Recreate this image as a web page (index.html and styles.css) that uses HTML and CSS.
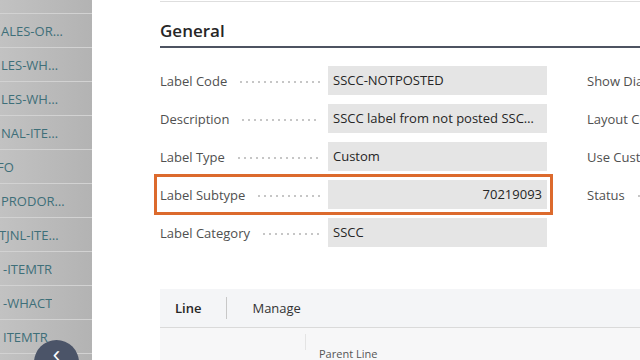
FILE: index.html
```html
<!DOCTYPE html>
<html lang="en">
<head>
    <meta charset="UTF-8">
    <meta name="viewport" content="width=device-width, initial-scale=1.0">
    <title>Label Card</title>
    <link rel="stylesheet" href="styles.css">
</head>
<body>
    <div class="page">
        <!-- Dimmed list pane on the left -->
        <aside class="list-pane">
            <div class="list-row"><span>ALES-ORDER-SHIPMENT</span></div>
            <div class="list-row"><span>LES-WH…</span></div>
            <div class="list-row"><span>LES-WH…</span></div>
            <div class="list-row"><span>NAL-ITEM-LABEL</span></div>
            <div class="list-row"><span class="cut">FO</span></div>
            <div class="list-row"><span>PRODORDER-OUTPUT</span></div>
            <div class="list-row"><span class="nudge">TJNL-ITEM-LABEL</span></div>
            <div class="list-row"><span class="pad">-ITEMTR</span></div>
            <div class="list-row"><span class="pad">-WHACT</span></div>
            <div class="list-row"><span class="pad">ITEMTR</span></div>
            <div class="list-row"></div>
            <button class="collapse-btn" aria-label="Collapse">&#8249;</button>
        </aside>

        <main class="card">
            <section class="general">
                <h2>General</h2>

                <div class="fields">
                    <div class="field">
                        <span class="caption">Label Code</span>
                        <span class="leader"></span>
                        <span class="value">SSCC-NOTPOSTED</span>
                    </div>
                    <div class="field right">
                        <span class="caption">Show Dialog</span>
                        <span class="leader"></span>
                    </div>

                    <div class="field">
                        <span class="caption">Description</span>
                        <span class="leader"></span>
                        <span class="value">SSCC label from not posted SSCC labels</span>
                    </div>
                    <div class="field right">
                        <span class="caption">Layout Code</span>
                        <span class="leader"></span>
                    </div>

                    <div class="field">
                        <span class="caption">Label Type</span>
                        <span class="leader"></span>
                        <span class="value">Custom</span>
                    </div>
                    <div class="field right">
                        <span class="caption">Use Custom Layout</span>
                        <span class="leader"></span>
                    </div>

                    <div class="field highlighted">
                        <span class="caption">Label Subtype</span>
                        <span class="leader"></span>
                        <span class="value number">70219093</span>
                    </div>
                    <div class="field right">
                        <span class="caption">Status</span>
                        <span class="leader"></span>
                    </div>

                    <div class="field">
                        <span class="caption">Label Category</span>
                        <span class="leader"></span>
                        <span class="value">SSCC</span>
                    </div>
                    <div class="field right"></div>
                </div>
            </section>

            <section class="lines">
                <div class="action-bar">
                    <span class="action active">Line</span>
                    <span class="divider"></span>
                    <span class="action">Manage</span>
                </div>
                <div class="grid-head">
                    <span class="col-sep"></span>
                    <span class="col-title">Parent Line</span>
                </div>
            </section>
        </main>
    </div>
</body>
</html>
```

FILE: styles.css
```css
body {
    margin: 0;
    padding: 0;
    font-family: "Open Sans", "Noto Sans", Arial, sans-serif;
    background-color: #fff;
    color: #212121;
    overflow: hidden;
}

.page {
    display: flex;
    width: 640px;
    height: 360px;
    overflow: hidden;
}

/* left list pane */
.list-pane {
    position: relative;
    flex: 0 0 92px;
    padding-top: 13px;
    background: linear-gradient(to right, #c2c2c2, #b3b3b3);
    overflow: hidden;
}

.list-row {
    height: 33px;
    border-top: 1px solid #d2d2d2;
    display: flex;
    align-items: center;
    font-size: 13px;
    color: #3e6f79;
    white-space: nowrap;
}

.list-row span {
    display: block;
    max-width: 66px;
    overflow: hidden;
    text-overflow: ellipsis;
    padding-left: 1px;
}

.list-row span.cut {
    margin-left: -4px;
}

.list-row span.nudge {
    margin-left: -2px;
}

.list-row span.pad {
    padding-left: 3px;
}

.collapse-btn {
    position: absolute;
    left: 34px;
    top: 340px;
    width: 45px;
    height: 45px;
    border-radius: 50%;
    border: none;
    background-color: #4b5468;
    color: #fff;
    font-size: 22px;
    line-height: 30px;
    padding: 0;
    display: flex;
    justify-content: center;
    align-items: flex-start;
}

/* card */
.card {
    flex: 1;
    padding-left: 68px;
    min-width: 0;
}

.general {
    width: 560px;
    margin-top: 1px;
    border-top: 1px solid #dedede;
}

.general h2 {
    margin: 0;
    padding-top: 17px;
    padding-bottom: 3px;
    font-size: 17px;
    font-weight: 600;
    line-height: 24px;
    color: #262626;
    border-bottom: 2px solid #4d5361;
}

.fields {
    display: grid;
    grid-template-columns: 387px 180px;
    column-gap: 40px;
    row-gap: 9px;
    margin-top: 18px;
}

.field {
    display: flex;
    align-items: center;
    height: 29px;
    font-size: 13px;
}

.caption {
    color: #505050;
    white-space: nowrap;
}

.leader {
    flex: 1;
    height: 2px;
    margin: 2px 8px 0 11px;
    background-image: radial-gradient(circle, #c4c4c4 0.7px, transparent 0.9px);
    background-size: 6px 2px;
    background-position: left center;
}

.field.right .leader {
    flex: 0 0 40px;
}

.value {
    flex: 0 0 219px;
    box-sizing: border-box;
    height: 29px;
    line-height: 29px;
    padding: 0 5px;
    background-color: #e5e5e5;
    color: #262626;
    white-space: nowrap;
    overflow: hidden;
    text-overflow: ellipsis;
}

.value.number {
    text-align: right;
}

.highlighted {
    outline: 3px solid #dc6a2d;
    outline-offset: 3px;
}

/* lines part */
.lines {
    margin-top: 42px;
    width: 520px;
    background-color: #f4f5f7;
}

.action-bar {
    display: flex;
    align-items: center;
    height: 38px;
    padding-left: 15px;
    border-bottom: 1px solid #dadada;
    font-size: 13px;
}

.action {
    color: #333;
}

.action.active {
    font-weight: 600;
    color: #262626;
}

.divider {
    width: 1px;
    height: 22px;
    margin: 0 25px 0 25px;
    background-color: #c8c8c8;
}

.grid-head {
    display: flex;
    align-items: flex-start;
    height: 40px;
    padding-left: 145px;
    background-color: #f7f7f8;
}

.col-sep {
    width: 1px;
    height: 16px;
    margin-top: 6px;
    background-color: #e4e4e4;
}

.col-title {
    margin-left: 13px;
    margin-top: 18px;
    font-size: 11px;
    color: #555;
}
```
